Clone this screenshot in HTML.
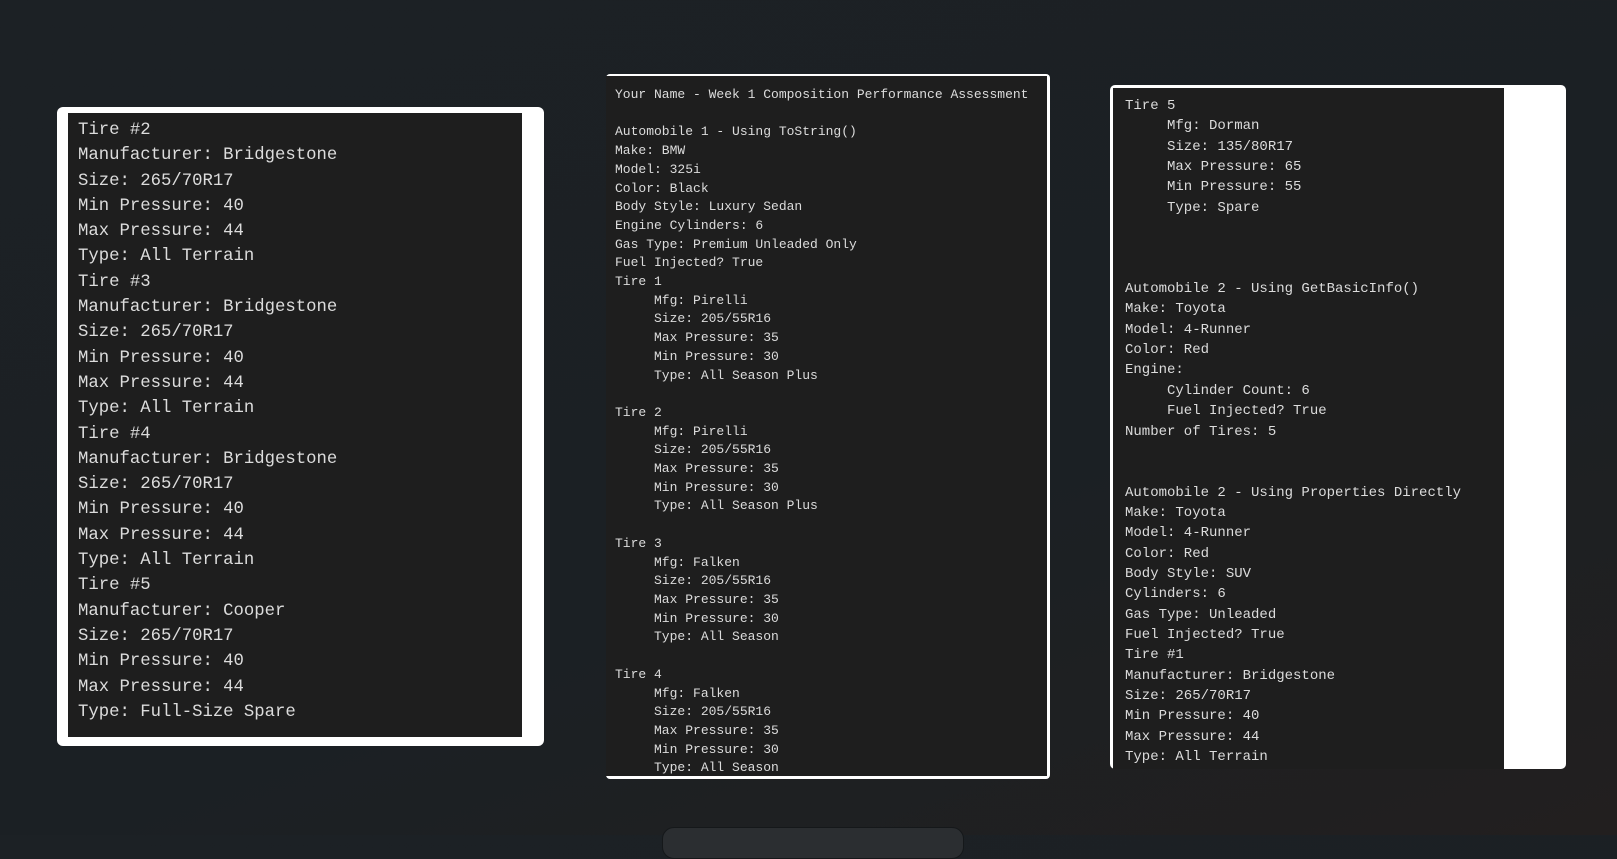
<!DOCTYPE html>
<html><head><meta charset="utf-8"><style>
html,body{margin:0;padding:0}
body{width:1617px;height:835px;overflow:hidden;position:relative;background:linear-gradient(160deg,#1c2125 0%,#1b2024 60%,#221f1f 100%);font-family:"Liberation Mono",monospace;color:#dcdcdc}
.card{position:absolute;background:#fff}
.panel{position:absolute;background:#1e1e1e;overflow:hidden}
pre{margin:0;font-family:"Liberation Mono",monospace;white-space:pre}
.pill{position:absolute;left:662px;top:827px;width:300px;height:30px;border-radius:12px;background:#2b2e31;border:1px solid #15181a}
</style></head><body>

<div class="card" style="left:57px;top:107px;width:487px;height:639px;border-radius:6px"></div>
<div class="panel" style="left:68px;top:113px;width:454px;height:624px">
<pre style="position:absolute;left:10px;top:5px;font-size:17.3px;line-height:25.3px">Tire #2
Manufacturer: Bridgestone
Size: 265/70R17
Min Pressure: 40
Max Pressure: 44
Type: All Terrain
Tire #3
Manufacturer: Bridgestone
Size: 265/70R17
Min Pressure: 40
Max Pressure: 44
Type: All Terrain
Tire #4
Manufacturer: Bridgestone
Size: 265/70R17
Min Pressure: 40
Max Pressure: 44
Type: All Terrain
Tire #5
Manufacturer: Cooper
Size: 265/70R17
Min Pressure: 40
Max Pressure: 44
Type: Full-Size Spare</pre>
</div>

<div class="card" style="left:606px;top:74px;width:444px;height:705px;border-radius:4px"></div>
<div class="panel" style="left:606px;top:76px;width:441px;height:700px">
<pre style="position:absolute;left:9px;top:10px;font-size:13px;line-height:18.7px">Your Name - Week 1 Composition Performance Assessment

Automobile 1 - Using ToString()
Make: BMW
Model: 325i
Color: Black
Body Style: Luxury Sedan
Engine Cylinders: 6
Gas Type: Premium Unleaded Only
Fuel Injected? True
Tire 1
     Mfg: Pirelli
     Size: 205/55R16
     Max Pressure: 35
     Min Pressure: 30
     Type: All Season Plus

Tire 2
     Mfg: Pirelli
     Size: 205/55R16
     Max Pressure: 35
     Min Pressure: 30
     Type: All Season Plus

Tire 3
     Mfg: Falken
     Size: 205/55R16
     Max Pressure: 35
     Min Pressure: 30
     Type: All Season

Tire 4
     Mfg: Falken
     Size: 205/55R16
     Max Pressure: 35
     Min Pressure: 30
     Type: All Season</pre>
</div>

<div class="card" style="left:1110px;top:85px;width:456px;height:684px;border-radius:5px"></div>
<div class="panel" style="left:1113px;top:88px;width:391px;height:681px">
<pre style="position:absolute;left:12px;top:8px;font-size:14px;line-height:20.35px">Tire 5
     Mfg: Dorman
     Size: 135/80R17
     Max Pressure: 65
     Min Pressure: 55
     Type: Spare



Automobile 2 - Using GetBasicInfo()
Make: Toyota
Model: 4-Runner
Color: Red
Engine:
     Cylinder Count: 6
     Fuel Injected? True
Number of Tires: 5


Automobile 2 - Using Properties Directly
Make: Toyota
Model: 4-Runner
Color: Red
Body Style: SUV
Cylinders: 6
Gas Type: Unleaded
Fuel Injected? True
Tire #1
Manufacturer: Bridgestone
Size: 265/70R17
Min Pressure: 40
Max Pressure: 44
Type: All Terrain</pre>
</div>

<div class="pill"></div>
</body></html>
